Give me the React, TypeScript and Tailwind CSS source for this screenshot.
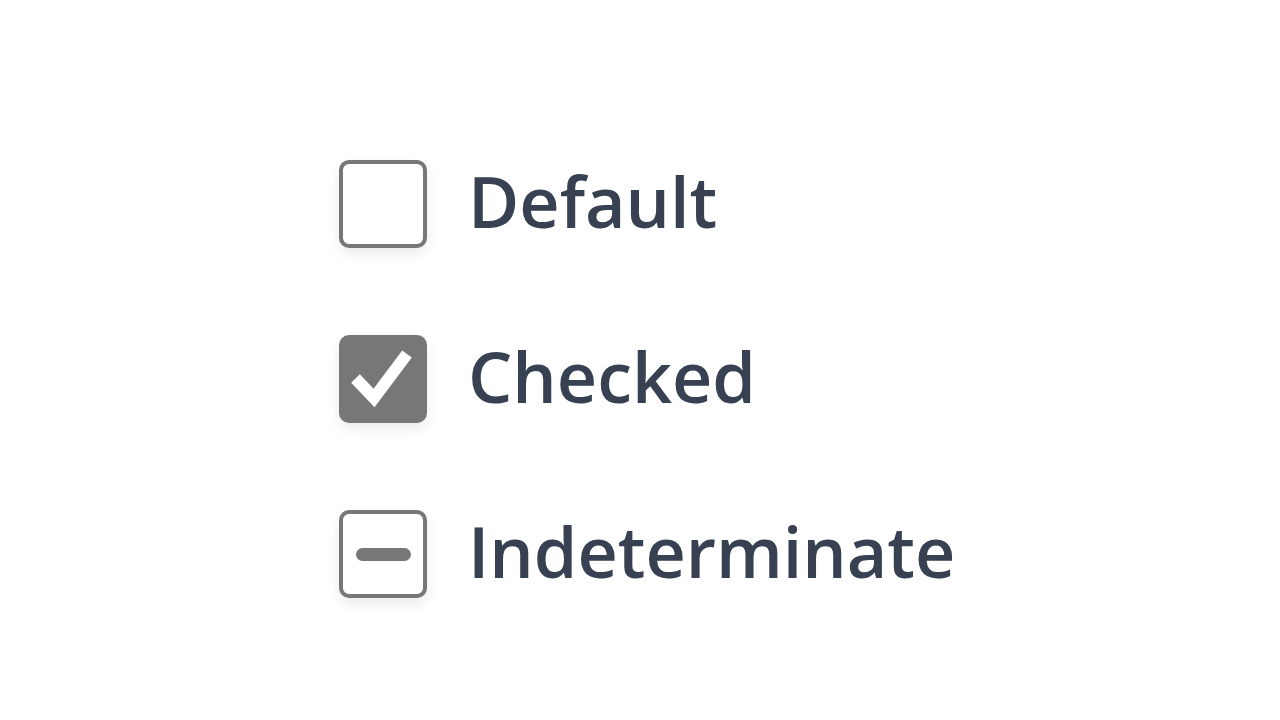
import React from "react";

type State = "default" | "checked" | "indeterminate";

function Box({ state }: { state: State }) {
  if (state === "checked") {
    return (
      <div className="w-[88px] h-[88px] shrink-0 rounded-[10px] bg-[#777777] shadow-[0_6px_14px_rgba(0,0,0,0.08)]">
        <svg width="88" height="88" viewBox="0 0 88 88" className="block">
          <polyline
            points="16.5,43.5 35,63 68,19"
            fill="none"
            stroke="#ffffff"
            strokeWidth="12"
            strokeLinejoin="miter"
            strokeLinecap="butt"
          />
        </svg>
      </div>
    );
  }
  return (
    <div className="w-[88px] h-[88px] shrink-0 rounded-[10px] bg-white border-[4px] border-[#777777] shadow-[0_6px_14px_rgba(0,0,0,0.08)] flex items-center justify-center">
      {state === "indeterminate" && <div className="w-[55px] h-[13px] rounded-full bg-[#777777]" />}
    </div>
  );
}

const rows: { state: State; label: string }[] = [
  { state: "default", label: "Default" },
  { state: "checked", label: "Checked" },
  { state: "indeterminate", label: "Indeterminate" },
];

export default function App() {
  return (
    <main className="w-[1280px] h-[720px] bg-white pt-[160px] pl-[339px]">
      <div className="flex flex-col gap-[87px]">
        {rows.map((r) => (
          <label key={r.label} className="flex items-center gap-[41px] h-[88px]">
            <Box state={r.state} />
            <span
              className="text-[70px] leading-[82px] pb-[6px] font-semibold text-[#374151]"
              style={{ fontFamily: '"Open Sans", "Noto Sans", sans-serif' }}
            >
              {r.label}
            </span>
          </label>
        ))}
      </div>
    </main>
  );
}
